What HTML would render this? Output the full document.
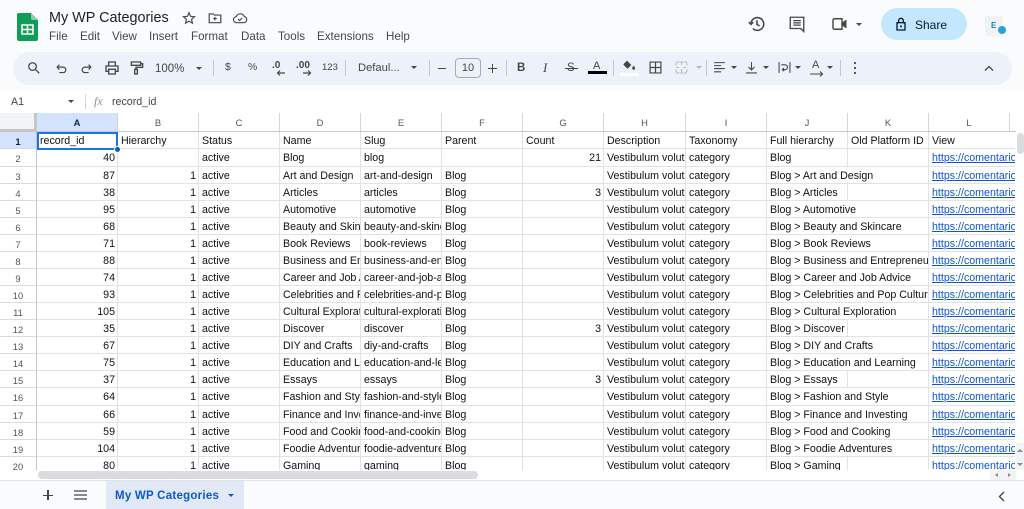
<!DOCTYPE html>
<html><head><meta charset="utf-8"><style>
*{box-sizing:border-box}
html,body{margin:0;padding:0;width:1024px;height:509px;overflow:hidden;background:#f9fbfd;font-family:"Liberation Sans",Arial,sans-serif;color:#1f1f1f}
#wrap{position:absolute;left:0;top:0;width:1024px;height:509px;overflow:hidden;background:#f9fbfd;filter:blur(.3px)}
.a{position:absolute;white-space:nowrap}
.ic{position:absolute;fill:none;stroke:#444746;stroke-width:1.8}
.f{fill:#444746;stroke:none}
.m{position:absolute;top:30px;font-size:11.6px;line-height:14px;color:#444746}
.t{position:absolute;font-size:10.4px;line-height:14px;color:#444746;top:61px;white-space:nowrap}
.ar{position:absolute;width:0;height:0;border-left:3.5px solid transparent;border-right:3.5px solid transparent;border-top:3.5px solid #444746}
.sp{position:absolute;top:60px;width:1px;height:16px;background:#c7c7c7}
#g{position:absolute;left:0;top:113px;width:1016px;height:357px;overflow:hidden;background:#fff}
.r{position:absolute;left:0;width:1016px;height:17.07px;display:flex;font-size:10.65px;line-height:19.5px;color:#111}
.r>div{flex:none;height:100%;border-right:1px solid #e1e3e3;border-bottom:1px solid #e1e3e3;padding:0 3px;overflow:hidden;white-space:nowrap}
.n{width:37px;text-align:center;color:#555!important;font-size:9.4px;border-right:1px solid #c4c7c9!important;border-bottom:1px solid #d9dbdc!important}
.w{width:81px}.h{width:82px}.l{width:86px;border-right:0!important}.s{width:162px}
.ra{text-align:right;padding-right:2px!important}
.l{color:#1155cc;text-decoration:underline}
#hd{position:absolute;left:0;top:0;height:19px;width:1016px;border-bottom:1px solid #c7c7c7;background:#fff}
#hd div{position:absolute;top:0;height:18px;text-align:center;font-size:9.4px;line-height:19.5px;color:#555;border-right:1px solid #d4d5d6}
</style></head><body><div id="wrap">

<svg style="position:absolute;left:17px;top:13px" width="21" height="28" viewBox="0 0 21 28"><path d="M2 0H14L21 7V26a2 2 0 0 1-2 2H2a2 2 0 0 1-2-2V2a2 2 0 0 1 2-2z" fill="#0f9d58"/><path d="M14 0L21 7H16a2 2 0 0 1-2-2z" fill="#87ceac"/><path d="M5 12h11v9H5z" fill="none" stroke="#fff" stroke-width="1.5"/><path d="M5 16.5h11M10.5 12v9" stroke="#fff" stroke-width="1.5"/></svg>
<div class="a" style="left:49px;top:9px;font-size:14.4px;line-height:18px;color:#1f1f1f">My WP Categories</div>
<svg class="ic" style="left:182px;top:11px" width="14" height="14" viewBox="0 0 24 24"><path d="M12 3l2.7 6.2 6.8.6-5.1 4.5 1.5 6.6L12 17.4l-5.9 3.500 1.500-6.600L2.500 9.800l6.800-.6z" stroke-width="2"/></svg>
<svg class="ic" style="left:208px;top:11px" width="14" height="14" viewBox="0 0 24 24"><path d="M2 5h7l2 2h11v13H2zM12 10v6M9 13h6" stroke-width="2"/></svg>
<svg class="ic" style="left:232px;top:10px" width="16" height="16" viewBox="0 0 24 24"><path d="M7 19a4.500 4.500 0 0 1-.6-9A6.500 6.500 0 0 1 18.500 9.800 4.700 4.700 0 0 1 18 19zM9 13.500l2.300 2.300 4-4" stroke-width="1.700"/></svg>

<div class="m" style="left:49px">File</div><div class="m" style="left:80px">Edit</div><div class="m" style="left:112px">View</div><div class="m" style="left:149px">Insert</div><div class="m" style="left:191px">Format</div><div class="m" style="left:241px">Data</div><div class="m" style="left:278px">Tools</div><div class="m" style="left:317px">Extensions</div><div class="m" style="left:386px">Help</div>

<svg class="ic" style="left:748px;top:15px" width="18" height="18" viewBox="0 0 24 24"><path d="M4 12a8.500 8.500 0 1 1 2.500 6M1 9.500l3 3 3-3M12 7v5.500l3.500 2" stroke-width="2.100"/></svg>
<svg class="ic" style="left:788px;top:15px" width="18" height="18" viewBox="0 0 24 24"><path d="M3 3h18v15h0v4l-4-4H3zM7 7.500h10M7 10.500h10M7 13.500h10" stroke-width="1.800"/></svg>
<svg class="ic" style="left:829px;top:15px" width="20" height="18" viewBox="0 0 24 24"><path d="M6 5h10v14H6a2 2 0 0 1-2-2V7a2 2 0 0 1 2-2z" stroke-width="1.900"/><path class="f" d="M16 10l6-4v12l-6-4z"/></svg>
<div class="ar" style="left:856px;top:23px"></div>
<div class="a" style="left:881px;top:8px;width:86px;height:32px;border-radius:16px;background:#c2e7ff"></div>
<svg class="ic" style="left:893px;top:15px;stroke:#001d35" width="16" height="18" viewBox="0 0 24 24"><path d="M6 10h12v11H6zM8.500 10V7a3.500 3.500 0 0 1 7 0v3" stroke-width="2"/><circle cx="12" cy="15.500" r="1.500" fill="#001d35" stroke="none"/></svg>
<div class="a" style="left:915px;top:18px;font-size:12px;line-height:14px;color:#001d35">Share</div>
<div class="a" style="left:985px;top:16px;width:18px;height:20px;background:#f0f2f4;border-radius:2px"></div>
<div class="a" style="left:991px;top:21px;font-size:8px;line-height:10px;color:#1a7fc0;font-weight:bold">E</div>
<div class="a" style="left:998px;top:26px;width:8px;height:8px;border-radius:50%;background:#2aa3d8"></div>

<div class="a" style="left:13px;top:52px;width:999px;height:33px;border-radius:16.500px;background:#edf2fa"></div>
<svg class="ic" style="left:27px;top:61px" width="14" height="14" viewBox="0 0 24 24"><circle cx="9.500" cy="9.500" r="6.500" stroke-width="2.200"/><path d="M14.500 14.500L21 21" stroke-width="2.200"/></svg>
<svg class="ic" style="left:55px;top:62px" width="13" height="13" viewBox="0 0 24 24"><path d="M8 5L4 9.500l4 4.500M4 9.500h11a5 5 0 0 1 0 10H8" stroke-width="2.200"/></svg>
<svg class="ic" style="left:80px;top:62px" width="13" height="13" viewBox="0 0 24 24"><path d="M16 5l4 4.500-4 4.500M20 9.500H9a5 5 0 0 0 0 10h7" stroke-width="2.200"/></svg>
<svg class="ic" style="left:104px;top:60px" width="16" height="16" viewBox="0 0 24 24"><path d="M7 8V3h10v5M7 17H3V9h18v8h-4M7 14h10v7H7z" stroke-width="2"/></svg>
<svg class="ic" style="left:128px;top:60px" width="16" height="16" viewBox="0 0 24 24"><path d="M5 3h14v5H5zM19 5.500h3V11H12v3M10 14h4v7h-4z" stroke-width="2"/></svg>
<div class="t" style="left:155px;font-size:11.500px;top:62px">100%</div><div class="ar" style="left:196px;top:67px"></div>
<div class="sp" style="left:213px"></div>
<div class="t" style="left:225px">$</div><div class="t" style="left:248px">%</div>
<div class="t" style="left:272px;top:59px;font-weight:bold;font-size:10px">.0</div>
<svg class="ic" style="left:276px;top:69px" width="10" height="8" viewBox="0 0 10 8"><path d="M9 4H2M4 1.500L1.500 4 4 6.500" stroke-width="1.200"/></svg>
<div class="t" style="left:296px;top:59px;font-weight:bold;font-size:10px">.00</div>
<svg class="ic" style="left:302px;top:69px" width="10" height="8" viewBox="0 0 10 8"><path d="M1 4h7M6 1.500L8.500 4 6 6.500" stroke-width="1.200"/></svg>
<div class="t" style="left:322px;font-size:9.500px">123</div>
<div class="sp" style="left:345px"></div>
<div class="t" style="left:358px;font-size:11.200px">Defaul...</div><div class="ar" style="left:411px;top:66px"></div>
<div class="sp" style="left:429px"></div>
<div class="a" style="left:438px;top:67.500px;width:8px;height:1.500px;background:#444746"></div>
<div class="a" style="left:455px;top:58px;width:26px;height:20px;border:1px solid #a9abae;border-radius:4px;text-align:center;font-size:11px;line-height:18px;color:#444746">10</div>
<div class="a" style="left:488px;top:67.500px;width:9px;height:1.500px;background:#444746"></div><div class="a" style="left:491.750px;top:64px;width:1.500px;height:9px;background:#444746"></div>
<div class="sp" style="left:506px"></div>
<div class="t" style="left:517px;font-weight:bold;font-size:11.500px">B</div>
<div class="t" style="left:543px;font-style:italic;font-family:'Liberation Serif',serif;font-size:13px">I</div>
<div class="t" style="left:567px;font-size:11.500px">S</div><div class="a" style="left:565px;top:67.500px;width:13px;height:1px;background:#444746"></div>
<div class="t" style="left:593px;top:59px;font-size:11px">A</div><div class="a" style="left:588px;top:71px;width:19px;height:3px;background:#000"></div>
<div class="sp" style="left:613px"></div>
<svg class="ic" style="left:622px;top:58px" width="14" height="14" viewBox="0 0 24 24"><path class="f" d="M7 3l9 9-5.500 5.500a1.500 1.500 0 0 1-2 0L3 12a1.500 1.500 0 0 1 0-2L8.500 4.500 7 3zM20 13s2.500 3 2.500 4.500a2.500 2.500 0 0 1-5 0C17.500 16 20 13 20 13z"/></svg>
<div class="a" style="left:620px;top:73px;width:19px;height:3px;background:#fff"></div>
<svg class="ic" style="left:649px;top:61px" width="13" height="13" viewBox="0 0 24 24"><path d="M2 2h20v20H2zM2 12h20M12 2v20" stroke-width="2.200"/></svg>
<svg class="ic" style="left:675px;top:61px;stroke:#b4b6b8" width="13" height="13" viewBox="0 0 24 24"><path d="M2 8V2h20v6M2 16v6h20v-6M12 2v7M12 15v7M2 12h7M15 12h7" stroke-width="2" stroke-dasharray="5 2"/></svg>
<div class="ar" style="left:696px;top:66px;border-top-color:#b4b6b8"></div>
<div class="sp" style="left:706px"></div>
<svg class="ic" style="left:713px;top:61px" width="13" height="13" viewBox="0 0 24 24"><path d="M2 3h20M2 8.500h13M2 14h20M2 20h13" stroke-width="2"/></svg><div class="ar" style="left:731px;top:66px"></div>
<svg class="ic" style="left:745px;top:61px" width="13" height="13" viewBox="0 0 24 24"><path d="M12 2v14M6.500 11l5.500 5.500 5.500-5.500M2 22h20" stroke-width="2"/></svg><div class="ar" style="left:763px;top:66px"></div>
<svg class="ic" style="left:778px;top:61px" width="13" height="13" viewBox="0 0 24 24"><path d="M2 2v20M22 2v20M6 7h7a4 4 0 0 1 0 9H8M11 13l-3 3 3 3" stroke-width="2"/></svg><div class="ar" style="left:795px;top:66px"></div>
<div class="t" style="left:812px;top:58px;font-size:11px">A</div><svg class="ic" style="left:810px;top:71px" width="14" height="6" viewBox="0 0 14 6"><path d="M0 3h12M10 .5L12.500 3 10 5.500" stroke-width="1.100"/></svg><div class="ar" style="left:827px;top:66px"></div>
<div class="sp" style="left:840px"></div>
<svg class="ic" style="left:853px;top:61px" width="4" height="14" viewBox="0 0 4 14"><circle class="f" cx="2" cy="2" r="1.100"/><circle class="f" cx="2" cy="7" r="1.100"/><circle class="f" cx="2" cy="12" r="1.100"/></svg>
<svg class="ic" style="left:984px;top:65px" width="10" height="7" viewBox="0 0 10 7"><path d="M1 5.500L5 1.500 9 5.500" stroke-width="1.300"/></svg>

<div class="a" style="left:0;top:90px;width:1024px;height:23px;background:#fff"></div>
<div class="a" style="left:11px;top:95px;font-size:10.650px;line-height:14px;color:#444">A1</div>
<div class="ar" style="left:68px;top:100px"></div>
<div class="a" style="left:85px;top:94px;width:1px;height:15px;background:#d5d6d7"></div>
<div class="a" style="left:94px;top:93px;font-family:'Liberation Serif',serif;font-style:italic;font-size:12px;line-height:16px;color:#8a8c8e">fx</div>
<div class="a" style="left:112px;top:95px;font-size:10.650px;line-height:14px;color:#444">record_id</div>

<div id="g">
<div id="hd">
<div style="left:0;width:37px;background:#f1f3f4;border-right:3px solid #c4c7c9;border-bottom:3px solid #c4c7c9;height:19px"></div>
<div style="left:37px;width:81px;background:#d3e3fd;font-weight:bold;color:#0b2a55">A</div>
<div style="left:118px;width:81px">B</div><div style="left:199px;width:81px">C</div><div style="left:280px;width:81px">D</div><div style="left:361px;width:81px">E</div><div style="left:442px;width:81px">F</div><div style="left:523px;width:81px">G</div><div style="left:604px;width:82px">H</div><div style="left:686px;width:81px">I</div><div style="left:767px;width:81px">J</div><div style="left:848px;width:81px">K</div><div style="left:929px;width:81px">L</div>
</div>
<div class="r" style="top:19.400px"><div class="n" style="background:#d3e3fd;font-weight:bold;color:#0b2a55!important">1</div><div class="w">record_id</div><div class="w">Hierarchy</div><div class="w">Status</div><div class="w">Name</div><div class="w">Slug</div><div class="w">Parent</div><div class="w">Count</div><div class="h">Description</div><div class="w">Taxonomy</div><div class="w">Full hierarchy</div><div class="w">Old Platform ID</div><div class="l" style="color:#111;text-decoration:none">View</div></div>
<div class="r" style="top:36.470px"><div class="n">2</div><div class="w ra">40</div><div class="w ra"></div><div class="w">active</div><div class="w">Blog</div><div class="w">blog</div><div class="w"></div><div class="w ra">21</div><div class="h">Vestibulum volutpat</div><div class="w">category</div><div class="w">Blog</div><div class="w"></div><div class="l">https://comentarios</div></div>
<div class="r" style="top:53.540px"><div class="n">3</div><div class="w ra">87</div><div class="w ra">1</div><div class="w">active</div><div class="w">Art and Design</div><div class="w">art-and-design</div><div class="w">Blog</div><div class="w ra"></div><div class="h">Vestibulum volutpat</div><div class="w">category</div><div class="s">Blog &gt; Art and Design</div><div class="l">https://comentarios</div></div>
<div class="r" style="top:70.610px"><div class="n">4</div><div class="w ra">38</div><div class="w ra">1</div><div class="w">active</div><div class="w">Articles</div><div class="w">articles</div><div class="w">Blog</div><div class="w ra">3</div><div class="h">Vestibulum volutpat</div><div class="w">category</div><div class="w">Blog &gt; Articles</div><div class="w"></div><div class="l">https://comentarios</div></div>
<div class="r" style="top:87.680px"><div class="n">5</div><div class="w ra">95</div><div class="w ra">1</div><div class="w">active</div><div class="w">Automotive</div><div class="w">automotive</div><div class="w">Blog</div><div class="w ra"></div><div class="h">Vestibulum volutpat</div><div class="w">category</div><div class="s">Blog &gt; Automotive</div><div class="l">https://comentarios</div></div>
<div class="r" style="top:104.750px"><div class="n">6</div><div class="w ra">68</div><div class="w ra">1</div><div class="w">active</div><div class="w">Beauty and Skincare</div><div class="w">beauty-and-skincare</div><div class="w">Blog</div><div class="w ra"></div><div class="h">Vestibulum volutpat</div><div class="w">category</div><div class="s">Blog &gt; Beauty and Skincare</div><div class="l">https://comentarios</div></div>
<div class="r" style="top:121.820px"><div class="n">7</div><div class="w ra">71</div><div class="w ra">1</div><div class="w">active</div><div class="w">Book Reviews</div><div class="w">book-reviews</div><div class="w">Blog</div><div class="w ra"></div><div class="h">Vestibulum volutpat</div><div class="w">category</div><div class="s">Blog &gt; Book Reviews</div><div class="l">https://comentarios</div></div>
<div class="r" style="top:138.890px"><div class="n">8</div><div class="w ra">88</div><div class="w ra">1</div><div class="w">active</div><div class="w">Business and Entrepreneurship</div><div class="w">business-and-entrepreneurship</div><div class="w">Blog</div><div class="w ra"></div><div class="h">Vestibulum volutpat</div><div class="w">category</div><div class="s">Blog &gt; Business and Entrepreneurship</div><div class="l">https://comentarios</div></div>
<div class="r" style="top:155.960px"><div class="n">9</div><div class="w ra">74</div><div class="w ra">1</div><div class="w">active</div><div class="w">Career and Job Advice</div><div class="w">career-and-job-advice</div><div class="w">Blog</div><div class="w ra"></div><div class="h">Vestibulum volutpat</div><div class="w">category</div><div class="s">Blog &gt; Career and Job Advice</div><div class="l">https://comentarios</div></div>
<div class="r" style="top:173.030px"><div class="n">10</div><div class="w ra">93</div><div class="w ra">1</div><div class="w">active</div><div class="w">Celebrities and Pop Culture</div><div class="w">celebrities-and-pop-culture</div><div class="w">Blog</div><div class="w ra"></div><div class="h">Vestibulum volutpat</div><div class="w">category</div><div class="s">Blog &gt; Celebrities and Pop Culture</div><div class="l">https://comentarios</div></div>
<div class="r" style="top:190.100px"><div class="n">11</div><div class="w ra">105</div><div class="w ra">1</div><div class="w">active</div><div class="w">Cultural Exploration</div><div class="w">cultural-exploration</div><div class="w">Blog</div><div class="w ra"></div><div class="h">Vestibulum volutpat</div><div class="w">category</div><div class="s">Blog &gt; Cultural Exploration</div><div class="l">https://comentarios</div></div>
<div class="r" style="top:207.170px"><div class="n">12</div><div class="w ra">35</div><div class="w ra">1</div><div class="w">active</div><div class="w">Discover</div><div class="w">discover</div><div class="w">Blog</div><div class="w ra">3</div><div class="h">Vestibulum volutpat</div><div class="w">category</div><div class="w">Blog &gt; Discover</div><div class="w"></div><div class="l">https://comentarios</div></div>
<div class="r" style="top:224.240px"><div class="n">13</div><div class="w ra">67</div><div class="w ra">1</div><div class="w">active</div><div class="w">DIY and Crafts</div><div class="w">diy-and-crafts</div><div class="w">Blog</div><div class="w ra"></div><div class="h">Vestibulum volutpat</div><div class="w">category</div><div class="s">Blog &gt; DIY and Crafts</div><div class="l">https://comentarios</div></div>
<div class="r" style="top:241.310px"><div class="n">14</div><div class="w ra">75</div><div class="w ra">1</div><div class="w">active</div><div class="w">Education and Learning</div><div class="w">education-and-learning</div><div class="w">Blog</div><div class="w ra"></div><div class="h">Vestibulum volutpat</div><div class="w">category</div><div class="s">Blog &gt; Education and Learning</div><div class="l">https://comentarios</div></div>
<div class="r" style="top:258.380px"><div class="n">15</div><div class="w ra">37</div><div class="w ra">1</div><div class="w">active</div><div class="w">Essays</div><div class="w">essays</div><div class="w">Blog</div><div class="w ra">3</div><div class="h">Vestibulum volutpat</div><div class="w">category</div><div class="w">Blog &gt; Essays</div><div class="w"></div><div class="l">https://comentarios</div></div>
<div class="r" style="top:275.450px"><div class="n">16</div><div class="w ra">64</div><div class="w ra">1</div><div class="w">active</div><div class="w">Fashion and Style</div><div class="w">fashion-and-style</div><div class="w">Blog</div><div class="w ra"></div><div class="h">Vestibulum volutpat</div><div class="w">category</div><div class="s">Blog &gt; Fashion and Style</div><div class="l">https://comentarios</div></div>
<div class="r" style="top:292.520px"><div class="n">17</div><div class="w ra">66</div><div class="w ra">1</div><div class="w">active</div><div class="w">Finance and Investing</div><div class="w">finance-and-investing</div><div class="w">Blog</div><div class="w ra"></div><div class="h">Vestibulum volutpat</div><div class="w">category</div><div class="s">Blog &gt; Finance and Investing</div><div class="l">https://comentarios</div></div>
<div class="r" style="top:309.590px"><div class="n">18</div><div class="w ra">59</div><div class="w ra">1</div><div class="w">active</div><div class="w">Food and Cooking</div><div class="w">food-and-cooking</div><div class="w">Blog</div><div class="w ra"></div><div class="h">Vestibulum volutpat</div><div class="w">category</div><div class="s">Blog &gt; Food and Cooking</div><div class="l">https://comentarios</div></div>
<div class="r" style="top:326.660px"><div class="n">19</div><div class="w ra">104</div><div class="w ra">1</div><div class="w">active</div><div class="w">Foodie Adventures</div><div class="w">foodie-adventures</div><div class="w">Blog</div><div class="w ra"></div><div class="h">Vestibulum volutpat</div><div class="w">category</div><div class="s">Blog &gt; Foodie Adventures</div><div class="l">https://comentarios</div></div>
<div class="r" style="top:343.730px"><div class="n">20</div><div class="w ra">80</div><div class="w ra">1</div><div class="w">active</div><div class="w">Gaming</div><div class="w">gaming</div><div class="w">Blog</div><div class="w ra"></div><div class="h">Vestibulum volutpat</div><div class="w">category</div><div class="w">Blog &gt; Gaming</div><div class="w"></div><div class="l">https://comentarios</div></div>
<div class="a" style="left:37px;top:19px;width:81px;height:18px;border:2px solid #1a73e8"></div>
<div class="a" style="left:114px;top:33px;width:7px;height:7px;border-radius:50%;background:#0b57d0;border:1px solid #fff"></div>
</div>

<div class="a" style="left:1016px;top:113px;width:8px;height:357px;background:#fff"></div>
<div class="a" style="left:1017px;top:133px;width:7px;height:21px;border-radius:4px;background:#dadce0"></div>
<div class="a" style="left:1016px;top:443px;width:8px;height:28px;background:#f1f3f4"></div>
<div class="ar" style="left:1016.500px;top:449px;border-top:0;border-bottom:3.500px solid #8a8c8e"></div>
<div class="ar" style="left:1016.500px;top:463px;border-top-color:#8a8c8e"></div>
<div class="a" style="left:0;top:470px;width:1024px;height:11px;background:#fff;border-bottom:1px solid #e1e3e3"></div>
<div class="a" style="left:38px;top:471px;width:440px;height:8px;border-radius:4px;background:#dadce0"></div>
<div class="a" style="left:990px;top:471px;width:26px;height:9px;background:#f1f3f4"></div>
<div class="a" style="left:995px;top:473px;border-top:2.500px solid transparent;border-bottom:2.500px solid transparent;border-right:3px solid #8a8c8e"></div>
<div class="a" style="left:1008px;top:473px;border-top:2.500px solid transparent;border-bottom:2.500px solid transparent;border-left:3px solid #8a8c8e"></div>

<div class="a" style="left:43px;top:494.500px;width:10px;height:1.500px;background:#444746"></div><div class="a" style="left:47.250px;top:490px;width:1.500px;height:10px;background:#444746"></div>
<svg class="ic" style="left:74px;top:490px" width="13" height="10" viewBox="0 0 13 10"><path d="M0 1h13M0 5h13M0 9h13" stroke-width="1.300"/></svg>
<div class="a" style="left:106px;top:481px;width:138px;height:28px;background:#e1e9f7"></div>
<div class="a" style="left:115px;top:489px;font-size:11.500px;line-height:14px;font-weight:bold;color:#0b57d0;letter-spacing:.25px">My WP Categories</div>
<div class="ar" style="left:228px;top:494px;border-top-color:#0b57d0"></div>
<svg class="ic" style="left:998px;top:491px" width="7" height="11" viewBox="0 0 7 11"><path d="M6 1L1.500 5.500 6 10" stroke-width="1.400"/></svg>
</div></body></html>
